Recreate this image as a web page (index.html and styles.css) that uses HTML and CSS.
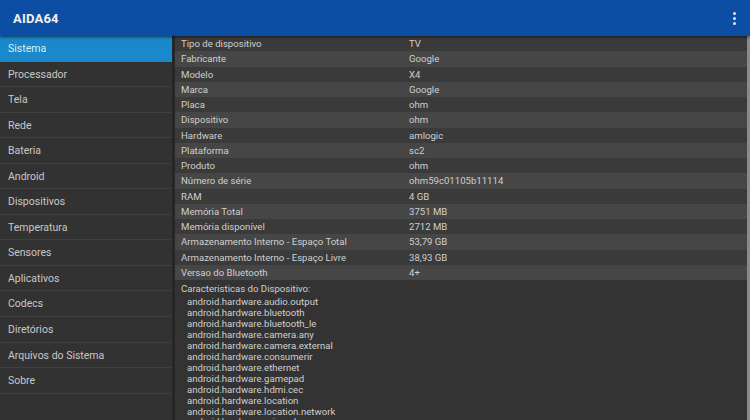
FILE: index.html
```html
<!DOCTYPE html>
<html lang="pt">

<head>
  <meta charset="UTF-8" />
  <meta name="viewport" content="width=device-width, initial-scale=1.0" />
  <title>AIDA64</title>
  <link rel="stylesheet" href="styles.css">
</head>

<body>
  <header class="appbar">
    <h1>AIDA64</h1>
    <span class="menu-btn"><i></i><i></i><i></i></span>
  </header>

  <div class="main">
    <nav class="sidebar">
      <ul>
        <li class="active">Sistema</li>
        <li>Processador</li>
        <li>Tela</li>
        <li>Rede</li>
        <li>Bateria</li>
        <li>Android</li>
        <li>Dispositivos</li>
        <li>Temperatura</li>
        <li>Sensores</li>
        <li>Aplicativos</li>
        <li>Codecs</li>
        <li>Diretórios</li>
        <li>Arquivos do Sistema</li>
        <li>Sobre</li>
      </ul>
    </nav>

    <section class="content">
      <table class="info">
        <tr><td>Tipo de dispositivo</td><td>TV</td></tr>
        <tr><td>Fabricante</td><td>Google</td></tr>
        <tr><td>Modelo</td><td>X4</td></tr>
        <tr><td>Marca</td><td>Google</td></tr>
        <tr><td>Placa</td><td>ohm</td></tr>
        <tr><td>Dispositivo</td><td>ohm</td></tr>
        <tr><td>Hardware</td><td>amlogic</td></tr>
        <tr><td>Plataforma</td><td>sc2</td></tr>
        <tr><td>Produto</td><td>ohm</td></tr>
        <tr><td>Número de série</td><td>ohm59c01105b11114</td></tr>
        <tr><td>RAM</td><td>4 GB</td></tr>
        <tr><td>Memória Total</td><td>3751 MB</td></tr>
        <tr><td>Memória disponível</td><td>2712 MB</td></tr>
        <tr><td>Armazenamento Interno - Espaço Total</td><td>53,79 GB</td></tr>
        <tr><td>Armazenamento Interno - Espaço Livre</td><td>38,93 GB</td></tr>
        <tr><td>Versao do Bluetooth</td><td>4+</td></tr>
      </table>

      <div class="features">
        <p class="features-title">Caracteristicas do Dispositivo:</p>
        <ul>
          <li>android.hardware.audio.output</li>
          <li>android.hardware.bluetooth</li>
          <li>android.hardware.bluetooth_le</li>
          <li>android.hardware.camera.any</li>
          <li>android.hardware.camera.external</li>
          <li>android.hardware.consumerir</li>
          <li>android.hardware.ethernet</li>
          <li>android.hardware.gamepad</li>
          <li>android.hardware.hdmi.cec</li>
          <li>android.hardware.location</li>
          <li>android.hardware.location.network</li>
          <li>android.hardware.microphone</li>
        </ul>
      </div>
    </section>
    <div class="scrollbar"></div>
  </div>
</body>

</html>
```

FILE: styles.css
```css
html,
body {
  margin: 0;
  height: 420px;
  overflow: hidden;
}

body {
  font-family: Roboto, 'Noto Sans', sans-serif;
  background-color: #2d2d2d;
  color: #cfcfcf;
  display: flex;
  flex-direction: column;
}

.appbar {
  height: 36px;
  flex-shrink: 0;
  background-color: #0b4ea3;
  display: flex;
  align-items: center;
  justify-content: space-between;
  padding: 0 14px 0 13px;
  box-shadow: 0 1px 3px rgba(0, 0, 0, 0.6);
  position: relative;
  z-index: 1;
}

.appbar h1 {
  margin: 0;
  font-size: 13px;
  font-weight: bold;
  color: #f2f2f2;
  letter-spacing: 0.2px;
}

.menu-btn {
  display: flex;
  flex-direction: column;
  gap: 2px;
}

.menu-btn i {
  width: 3px;
  height: 3px;
  border-radius: 50%;
  background-color: #dde6f5;
}

.main {
  flex: 1;
  display: flex;
  min-height: 0;
}

.sidebar {
  width: 172px;
  flex-shrink: 0;
  background-color: #323232;
  border-right: 3px solid #262626;
}

.sidebar ul {
  list-style: none;
  margin: 0;
  padding: 0;
}

.sidebar li {
  height: 24.55px;
  line-height: 25.5px;
  padding-left: 8px;
  font-size: 10.5px;
  color: #c8c8c8;
  border-bottom: 1px solid #3f3f3f;
}

.sidebar li.active {
  background-color: #1a88cb;
  color: #d9eefb;
  border-bottom-color: #1a88cb;
}

.content {
  flex: 1;
  background-color: #333333;
  overflow: hidden;
}

.info {
  width: 100%;
  border-collapse: collapse;
  font-size: 9.6px;
}

.info tr:nth-child(odd) {
  background-color: #3a3a3a;
}

.info tr:nth-child(even) {
  background-color: #464646;
}

.info td {
  height: 15.25px;
  padding: 0 0 0 6px;
  line-height: 15px;
  white-space: nowrap;
}

.info td:first-child {
  width: 222px;
}

.features {
  padding: 3px 0 0 6px;
  font-size: 9.6px;
}

.features-title {
  margin: 0 0 2px;
  line-height: 12px;
}

.features ul {
  list-style: none;
  margin: 0;
  padding: 0 0 0 6px;
}

.features li {
  line-height: 10.95px;
}

.scrollbar {
  width: 3px;
  flex-shrink: 0;
  background-color: #8a8a8a;
}
```
